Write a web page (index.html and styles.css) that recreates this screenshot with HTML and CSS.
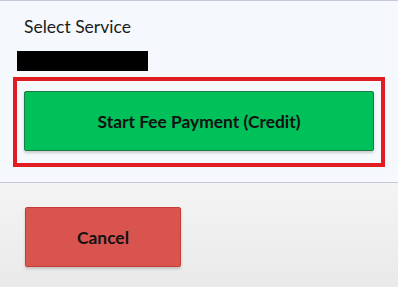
FILE: index.html
```html
<!DOCTYPE html>
<html>
<head>
<meta charset="utf-8">
<link rel="stylesheet" href="styles.css">
</head>
<body>
<div class="panel">
  <section class="body">
    <div class="label">Select Service</div>
    <div class="redacted"></div>
    <div class="highlight">
      <button class="btn btn-green">Start Fee Payment (Credit)</button>
    </div>
  </section>
  <footer class="footer">
    <button class="btn btn-red">Cancel</button>
  </footer>
</div>
</body>
</html>
```
FILE: styles.css
```css
html, body {
  margin: 0;
  padding: 0;
  height: 100%;
}
body {
  font-family: Lato, "Liberation Sans", sans-serif;
  color: #1c1c1c;
  background: #f5f8fc;
}
.panel {
  display: flex;
  flex-direction: column;
  height: 100%;
}
.body {
  border-top: 1px solid #c6c9d8;
  background: #f5f8fc;
  padding: 15px 13px 15px 13px;
  display: flex;
  flex-direction: column;
  border-bottom: 1px solid #c6c6d6;
}
.label {
  font-size: 17.5px;
  line-height: 22px;
  padding-left: 11px;
}
.redacted {
  width: 131px;
  height: 20px;
  background: #000;
  margin: 13px 0 0 4px;
}
.highlight {
  margin-top: 6px;
  border: 4px solid #e21d22;
  padding: 10px 7px 12px 7px;
}
.btn {
  font-family: inherit;
  font-weight: bold;
  color: #111;
  border-radius: 2px;
  cursor: pointer;
  height: 60px;
  box-shadow: 0 2px 3px rgba(0,0,0,0.18);
}
.btn-green {
  display: block;
  width: 100%;
  font-size: 17.4px;
  background: #00c05a;
  border: 1px solid #1c7c43;
}
.footer {
  flex: 1;
  background: linear-gradient(#f4f4f4, #e9e9e9);
  padding: 24px 25px;
}
.btn-red {
  width: 156px;
  font-size: 17.4px;
  background: #da544f;
  border: 1px solid #c73c37;
}
```
